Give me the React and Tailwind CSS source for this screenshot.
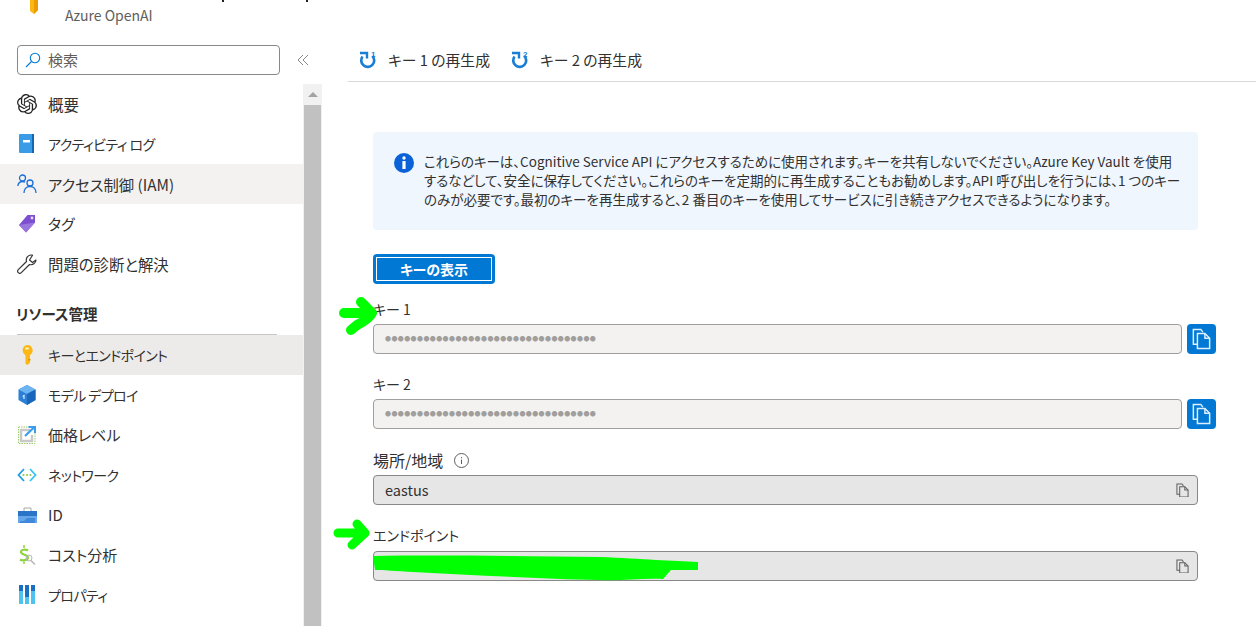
import React from "react";
import { SiOpenai } from "react-icons/si";

const F = "font-['Noto_Sans_CJK_JP','Noto_Sans',sans-serif] [font-feature-settings:'palt']";

const icons = {
  log: (
    <svg width="16" height="20" viewBox="0 0 16 20">
      <rect x="0" y="0" width="15" height="19" rx="1" fill="#3a9be6" />
      <rect x="13" y="0" width="2" height="19" fill="#1566b0" />
      <rect x="4" y="6" width="7" height="2.5" fill="#fff" />
    </svg>
  ),
  iam: (
    <svg width="20" height="20" viewBox="0 0 20 20" fill="none" stroke="#1a6fd8" strokeWidth="1.3">
      <circle cx="5.5" cy="4" r="3" />
      <path d="M.8 12c.5-3 2.3-4.5 4.7-4.5 1 0 1.8.2 2.5.7" />
      <circle cx="13" cy="9" r="3" />
      <path d="M7 19c0-4 2.5-6.5 6-6.5s6 2.5 6 6.5" />
    </svg>
  ),
  tag: (
    <svg width="18" height="20" viewBox="0 0 18 20">
      <path d="M9.5 1h7.5v7.5L8 18.5 1 11z" fill="#7b4fd0" />
      <path d="M1 11l7 7.500 9-10z" fill="#9a77de" />
      <circle cx="14" cy="4" r="1.4" fill="#e4dcf7" />
    </svg>
  ),
  wrench: (
    <svg width="20" height="20" viewBox="0 0 20 20" fill="none" stroke="#333" strokeWidth="1.2" strokeLinejoin="round">
      <path d="M14 1a5 5 0 0 0-4.500 6.500L1.300 15.700a2 2 0 0 0 3 3l8.200-8.200A5 5 0 0 0 19 6l-3.500 2.500-3-2.500L15.500 1.200A5 5 0 0 0 14 1z" />
    </svg>
  ),
  key: (
    <svg width="12" height="20" viewBox="0 0 12 20">
      <path d="M6 0a5.500 5.500 0 0 1 3 10.200V18l-3 2-1.500-1.500V10.200A5.500 5.500 0 0 1 6 0z" fill="#fcb713" />
      <rect x="4" y="2.5" width="4" height="2" rx="1" fill="#fff2c4" />
      <rect x="7" y="14" width="2.5" height="1.5" fill="#e09a00" />
    </svg>
  ),
  cube: (
    <svg width="18" height="20" viewBox="0 0 18 20">
      <path d="M9 0l8.500 4.500v10.500L9 20 .5 15V4.500z" fill="#2b7fd6" />
      <path d="M9 0l8.500 4.500L9 9 .5 4.500z" fill="#6db5f0" />
      <path d="M9 9l8.500-4.500v10.500L9 20z" fill="#1a66bd" />
      <path d="M4.500 11l2-1.500v4.500h-1v-2.500h-1z" fill="#fff" />
    </svg>
  ),
  price: (
    <svg width="18" height="18" viewBox="0 0 18 18" fill="none">
      <rect x=".5" y="1" width="16.5" height="16.5" stroke="#9ccb6b" strokeDasharray="1.5 1" />
      <path d="M12 4H3v11h11V9" stroke="#c9c9c9" strokeWidth="2.5" />
      <path d="M7 10l9-8.500M10.500 1H17v6" stroke="#3a9df0" strokeWidth="2.2" />
    </svg>
  ),
  net: (
    <svg width="20" height="14" viewBox="0 0 20 14" fill="none">
      <path d="M7 1L1.500 7 7 13" stroke="#1f9fe6" strokeWidth="1.8" />
      <path d="M13 1l5.500 6L13 13" stroke="#35c4f5" strokeWidth="1.8" />
      <circle cx="6.500" cy="7" r="1.100" fill="#8fc95a" />
      <circle cx="10" cy="7" r="1.100" fill="#8fc95a" />
      <circle cx="13.500" cy="7" r="1.100" fill="#8fc95a" />
    </svg>
  ),
  id: (
    <svg width="19" height="17" viewBox="0 0 19 17">
      <path d="M6 4V1h7v3" fill="none" stroke="#aaa" strokeWidth="1" />
      <rect x="0" y="4" width="19" height="5" fill="#2a74c8" />
      <rect x="0" y="9" width="19" height="7" fill="#67a6e8" />
      <path d="M2 14h4l3-3h8v5H2z" fill="#3f88da" />
    </svg>
  ),
  cost: (
    <svg width="18" height="20" viewBox="0 0 18 20" fill="none">
      <path d="M10 5.500C8.500 4.500 3 4 3 7s7 2.500 7 5.500S4 16 2 14.500" stroke="#8fd33d" strokeWidth="2.2" />
      <path d="M6 0v3M6 16.500V19" stroke="#8fd33d" strokeWidth="1.5" />
      <circle cx="11" cy="13" r="3" stroke="#b5b5b5" strokeWidth="1" />
      <path d="M13 15.500l4 4" stroke="#b5b5b5" strokeWidth="1.5" />
    </svg>
  ),
  prop: (
    <svg width="16" height="20" viewBox="0 0 16 20">
      <rect x="0" y="0" width="4" height="19" fill="#4fc3ef" />
      <rect x="6" y="0" width="4" height="19" fill="#4fc3ef" />
      <rect x="12" y="0" width="4" height="19" fill="#4fc3ef" />
      <rect x="0" y="0" width="4" height="6" fill="#1a6fc4" />
      <rect x="6" y="0" width="4" height="12" fill="#1a6fc4" />
      <rect x="12" y="0" width="4" height="6" fill="#1a6fc4" />
    </svg>
  ),
};

function NavRow({ icon, label, bg = "", text = "text-[15px]" }) {
  return (
    <div className={`flex h-10 items-center pl-[17px] ${bg}`}>
      <span className="flex w-[20px] justify-center">{icon}</span>
      <span className={`ml-[11px] pt-px text-[#323130] ${text}`}>{label}</span>
    </div>
  );
}

const KANA = "text-[14px] tracking-[-0.6px]";

function Regen({ n }) {
  return (
    <div className="flex items-center">
      <svg width="20" height="20" viewBox="0 0 20 20" fill="none">
        <path d="M14.500 6A6.500 6.500 0 1 1 4.500 6.500" stroke="#1a7fd4" strokeWidth="2.7" />
        <path d="M2 3H9V8.500" stroke="#1a7fd4" strokeWidth="2.4" />
        <text x="13" y="7" fontSize="8" fontWeight="700" fill="#1a7fd4" fontFamily="'Liberation Sans',sans-serif">{n}</text>
      </svg>
      <span className="ml-[10px] text-[14.8px] text-[#323130]">キー {n} の再生成</span>
    </div>
  );
}

function CopyGlyph({ color, fill = "none", size = 14 }) {
  return (
    <svg width={size} height={size * 1.15} viewBox="0 0 14 16" fill="none" stroke={color} strokeWidth="1.1">
      <path d="M4 12H1V1h5.500L8 3" />
      <path d="M4 4h5.500L13 7.500V15H4z" fill={fill} />
      <path d="M9.500 4v3.500H13" />
    </svg>
  );
}

function Secret({ label, mt }) {
  return (
    <>
      <div className={`${mt} h-[20px] text-sm leading-[20px] text-[#323130]`}>{label}</div>
      <div className="mt-[5px] flex w-[843px] items-center">
        <div className="flex h-[30px] w-[809px] items-center rounded-sm border border-[#a19f9d] bg-[#f3f2f1] pl-[11px] text-[6px] leading-none tracking-[0.4px] text-[#a19f9d]">
          {"●".repeat(33)}
        </div>
        <div className="ml-[5px] flex h-[30px] w-[29px] items-center justify-center rounded-sm bg-[#0078d4]">
          <CopyGlyph color="#dcefff" fill="#0078d4" size={19} />
        </div>
      </div>
    </>
  );
}

function ReadOnly({ value }) {
  return (
    <div className="mt-[5px] flex h-[30px] w-[825px] items-center justify-between rounded-sm border border-[#8a8886] bg-[#e6e6e6] pl-[11px] pr-[8px] text-[14.5px] text-[#323130]">
      <span>{value}</span>
      <CopyGlyph color="#605e5c" size={13} />
    </div>
  );
}

function Arrow({ className, w, h, d, sw }) {
  return (
    <svg className={`absolute ${className}`} width={w} height={h} viewBox={`0 0 ${w} ${h}`} fill="none" stroke="#00ff00" strokeWidth={sw} strokeLinecap="round" strokeLinejoin="round">
      <path d={d} />
    </svg>
  );
}

export default function App() {
  return (
    <div className={`${F} relative flex h-[626px] w-[1256px] overflow-hidden bg-white`}>
      {/* Left blade menu */}
      <aside className="flex w-[348px] shrink-0">
        <div className="flex w-[322px] flex-col">
          <div className="relative h-[45px] shrink-0 overflow-hidden">
            <svg className="absolute left-[29px] top-0" width="10" height="14" viewBox="0 0 10 14">
              <path d="M1 0h8v10l-4 4-4-3z" fill="#fcb713" />
              <path d="M5 0h4v10l-4 4z" fill="#e89e00" />
            </svg>
            <div className="pl-[65px] pt-[5px] text-sm leading-[20px] text-[#605e5c]">Azure OpenAI</div>
            <div className="absolute left-[222px] top-0 h-[2px] w-[2px] bg-[#222]" />
            <div className="absolute left-[306px] top-0 h-[2px] w-[2px] bg-[#222]" />
          </div>
          <div className="flex h-[39px] shrink-0 items-start">
            <div className="ml-[17px] flex h-[30px] w-[263px] items-center rounded-sm border border-[#8a8886] pl-[7px]">
              <svg width="16" height="16" viewBox="0 0 16 16" fill="none" stroke="#0078d4" strokeWidth="1.1">
                <circle cx="10" cy="6" r="4.7" />
                <path d="M6.500 9.500L1 15" />
              </svg>
              <span className="ml-[7px] text-[15px] text-[#605e5c]">検索</span>
            </div>
            <svg className="ml-[17px] mt-[9px]" width="12" height="12" viewBox="0 0 12 12" fill="none" stroke="#8a8886" strokeWidth="1">
              <path d="M6 1L1 6l5 5M11 1L6 6l5 5" />
            </svg>
          </div>
          <div className="flex min-h-0 flex-1">
            <nav className="w-[303px] shrink-0">
              <NavRow icon={<SiOpenai size={20} color="#222" />} label="概要" text="text-[15.5px]" />
              <NavRow icon={icons.log} label="アクティビティ ログ" text={KANA} />
              <NavRow icon={icons.iam} label="アクセス制御 (IAM)" bg="bg-[#f3f2f1]" text="text-[15.3px]" />
              <NavRow icon={icons.tag} label="タグ" />
              <NavRow icon={icons.wrench} label="問題の診断と解決" text="text-[15.4px]" />
              <div className="flex h-[50px] items-end pb-[10px] pl-[16px] text-[14.5px] font-semibold leading-[20px] text-[#323130]">リソース管理</div>
              <div className="ml-[17px] h-px w-[260px] bg-[#c8c6c4]" />
              <NavRow icon={icons.key} label="キーとエンドポイント" bg="bg-[#edebe9]" text={KANA} />
              <NavRow icon={icons.cube} label="モデル デプロイ" text={KANA} />
              <NavRow icon={icons.price} label="価格レベル" />
              <NavRow icon={icons.net} label="ネットワーク" text={KANA} />
              <NavRow icon={icons.id} label="ID" />
              <NavRow icon={icons.cost} label="コスト分析" />
              <NavRow icon={icons.prop} label="プロパティ" text={KANA} />
            </nav>
            <div className="flex w-[19px] shrink-0 flex-col bg-[#f1f1f1]">
              <div className="flex h-[21px] items-center justify-center">
                <div className="h-0 w-0 border-x-[5px] border-b-[5px] border-x-transparent border-b-[#a3a3a3]" />
              </div>
              <div className="mx-[1px] flex-1 bg-[#c1c1c1]" />
            </div>
          </div>
        </div>
      </aside>

      {/* Content */}
      <main className="flex-1 pt-[40px]">
        <div className="flex h-[42px] items-center gap-[20px] border-b border-[#d9d9d9] pb-[1px] pl-[10px]">
          <Regen n={1} />
          <Regen n={2} />
        </div>
        <div className="pl-[25px] pt-[50px]">
          <div className="flex h-[98px] w-[825px] rounded-sm bg-[#eff6fe] pl-[21px] pt-[20px]">
            <svg className="mt-[1px] shrink-0" width="20" height="20" viewBox="0 0 20 20">
              <circle cx="10" cy="10" r="10" fill="#0b62d8" />
              <circle cx="10" cy="5" r="1.7" fill="#fff" />
              <rect x="8.4" y="8" width="3.2" height="8" fill="#fff" />
            </svg>
            <p className="ml-[10px] w-[760px] text-[13.5px] leading-[19px] text-[#323130]">
              これらのキーは、Cognitive Service API にアクセスするために使用されます。キーを共有しないでください。Azure Key Vault を使用するなどして、安全に保存してください。これらのキーを定期的に再生成することもお勧めします。API 呼び出しを行うには、1 つのキーのみが必要です。最初のキーを再生成すると、2 番目のキーを使用してサービスに引き続きアクセスできるようになります。
            </p>
          </div>
          <div className="mt-[24px] flex h-[30px] w-[122px] items-center justify-center rounded-sm bg-[#0078d4] p-[3px]">
            <div className="flex h-full w-full items-center justify-center border border-white text-[14px] font-semibold text-white">キーの表示</div>
          </div>
          <Secret label="キー 1" mt="mt-[15px]" />
          <Secret label="キー 2" mt="mt-[20px]" />
          <div className="mt-[21px] flex h-[20px] items-center text-[16px] text-[#323130]">
            場所/地域
            <svg className="ml-[11px]" width="15" height="15" viewBox="0 0 15 15" fill="none" stroke="#605e5c" strokeWidth="1">
              <circle cx="7.5" cy="7.5" r="7" />
              <path d="M7.500 6.500v4.500M7.500 4v1.200" />
            </svg>
          </div>
          <ReadOnly value="eastus" />
          <div className="mt-[20px] h-[21px] text-sm leading-[20px] text-[#323130]">エンドポイント</div>
          <ReadOnly value="" />
        </div>
      </main>

      {/* Green hand-drawn annotations laid over the screenshot */}
      <Arrow className="left-[335px] top-[290px]" w={50} h={52} sw={10} d="M9 23H35M26 12L37 23C35 28 28 32 22 35L16 40" />
      <Arrow className="left-[327px] top-[514px]" w={50} h={40} sw={9} d="M11 19H37M30 10L38 19L25 31" />
      <svg className="absolute left-[373px] top-[553px]" width="326" height="30" viewBox="0 0 326 30">
        <path d="M0 3C60 2 150 3 227 4C270 6 300 8 325 9L325 17L298 17L290 26C270 25 250 28 225 27C170 26 100 22 40 19C25 18 8 17 2 17Z" fill="#00ff00" />
      </svg>
    </div>
  );
}
